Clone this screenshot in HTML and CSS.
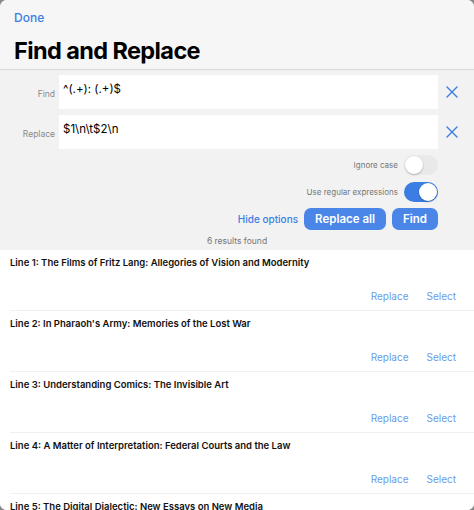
FILE: index.html
```html
<!DOCTYPE html>
<html>
<head>
<meta charset="utf-8">
<link rel="stylesheet" href="styles.css">
</head>
<body>
<div class="sheet">
  <div class="header">
    <div class="done">Done</div>
    <h1 class="title">Find and Replace</h1>
  </div>
  <div class="options">
    <div class="field">
      <span class="flabel">Find</span>
      <div class="input">^(.+): (.+)$</div>
      <svg class="clear" width="12" height="12" viewBox="0 0 12 12"><path d="M1 1L11 11M11 1L1 11" stroke="#3b7de3" stroke-width="1.4" stroke-linecap="round"/></svg>
    </div>
    <div class="field">
      <span class="flabel">Replace</span>
      <div class="input">$1\n\t$2\n</div>
      <svg class="clear" width="12" height="12" viewBox="0 0 12 12"><path d="M1 1L11 11M11 1L1 11" stroke="#3b7de3" stroke-width="1.4" stroke-linecap="round"/></svg>
    </div>
    <div class="toggles">
      <div class="toggle-row">
        <span class="tlabel">Ignore case</span>
        <span class="switch"><span class="knob"></span></span>
      </div>
      <div class="toggle-row">
        <span class="tlabel">Use regular expressions</span>
        <span class="switch on"><span class="knob"></span></span>
      </div>
    </div>
    <div class="btn-row">
      <span class="link">Hide options</span>
      <span class="btn">Replace all</span>
      <span class="btn">Find</span>
    </div>
    <div class="count">6 results found</div>
  </div>
  <div class="results">
    <div class="row">
      <div class="rtitle">Line 1: The Films of Fritz Lang: Allegories of Vision and Modernity</div>
      <div class="actions"><span>Replace</span><span>Select</span></div>
    </div>
    <div class="row">
      <div class="rtitle">Line 2: In Pharaoh's Army: Memories of the Lost War</div>
      <div class="actions"><span>Replace</span><span>Select</span></div>
    </div>
    <div class="row">
      <div class="rtitle">Line 3: Understanding Comics: The Invisible Art</div>
      <div class="actions"><span>Replace</span><span>Select</span></div>
    </div>
    <div class="row">
      <div class="rtitle">Line 4: A Matter of Interpretation: Federal Courts and the Law</div>
      <div class="actions"><span>Replace</span><span>Select</span></div>
    </div>
    <div class="row">
      <div class="rtitle">Line 5: The Digital Dialectic: New Essays on New Media</div>
      <div class="actions"><span>Replace</span><span>Select</span></div>
    </div>
  </div>
</div>
</body>
</html>
```

FILE: styles.css
```css
html, body {
  margin: 0;
  padding: 0;
  background: #8a8a8a;
}
body {
  font-family: Inter, "Noto Sans", sans-serif;
  width: 474px;
  height: 510px;
  overflow: hidden;
}
.sheet {
  width: 474px;
  height: 510px;
  border-radius: 7px;
  overflow: hidden;
  background: #ffffff;
}
.header {
  background: #f6f6f6;
  height: 69px;
  border-bottom: 1px solid #d9d9d9;
  padding: 0 14px;
}
.done {
  padding-top: 10px;
  font-size: 12px;
  line-height: 15px;
  color: #3b7de3;
  font-weight: 500;
}
.title {
  margin: 12px 0 0 0;
  font-size: 23.5px;
  line-height: 28px;
  font-weight: 700;
  color: #000;
  letter-spacing: -0.6px;
}
.options {
  background: #f2f2f2;
  padding-top: 5px;
  height: 180px;
  box-sizing: border-box;
}
.field {
  display: flex;
  align-items: center;
  height: 34px;
  margin-bottom: 6px;
}
.flabel {
  width: 55px;
  text-align: right;
  font-size: 8.5px;
  color: #8a8a8a;
  padding-right: 4px;
  padding-top: 3px;
}
.input {
  width: 379px;
  height: 34px;
  background: #fff;
  font-size: 11.5px;
  line-height: 14px;
  padding: 7px 0 0 4px;
  box-sizing: border-box;
  color: #000;
}
.clear {
  margin-left: 8px;
}
.toggles {
  display: flex;
  flex-direction: column;
  gap: 7px;
}
.toggle-row {
  display: flex;
  justify-content: flex-end;
  align-items: center;
  padding-right: 36px;
  height: 20px;
}
.tlabel {
  font-size: 8px;
  color: #777;
  margin-right: 6px;
}
.switch {
  width: 34px;
  height: 20px;
  border-radius: 10px;
  background: #e9e9ea;
  position: relative;
}
.switch .knob {
  position: absolute;
  top: 1px;
  left: 1px;
  width: 18px;
  height: 18px;
  border-radius: 50%;
  background: #fff;
  box-shadow: 0 1px 2px rgba(0,0,0,0.25);
}
.switch.on {
  background: #3b7de3;
}
.switch.on .knob {
  left: 15px;
}
.btn-row {
  display: flex;
  justify-content: flex-end;
  align-items: center;
  padding-right: 36px;
  margin-top: 6px;
  height: 22px;
  gap: 6px;
}
.link {
  font-size: 10px;
  color: #3b7de3;
  font-weight: 500;
}
.btn {
  background: #4a86e8;
  color: #fff;
  font-size: 11.5px;
  font-weight: 600;
  height: 22px;
  line-height: 22px;
  border-radius: 7px;
  padding: 0 11px;
}
.count {
  text-align: center;
  font-size: 8.5px;
  line-height: 11px;
  color: #777;
  margin-top: 6px;
}
.results {
  background: #fff;
}
.row {
  height: 61px;
  box-sizing: border-box;
  border-bottom: 1px solid #f0f0f0;
  margin-left: 10px;
  padding-top: 6px;
}
.rtitle {
  font-size: 9.5px;
  font-weight: 600;
  color: #111;
  line-height: 14px;
}
.actions {
  display: flex;
  justify-content: flex-end;
  gap: 18px;
  margin-top: 20px;
  padding-right: 18px;
  font-size: 10px;
  color: #6b9be6;
}
```
